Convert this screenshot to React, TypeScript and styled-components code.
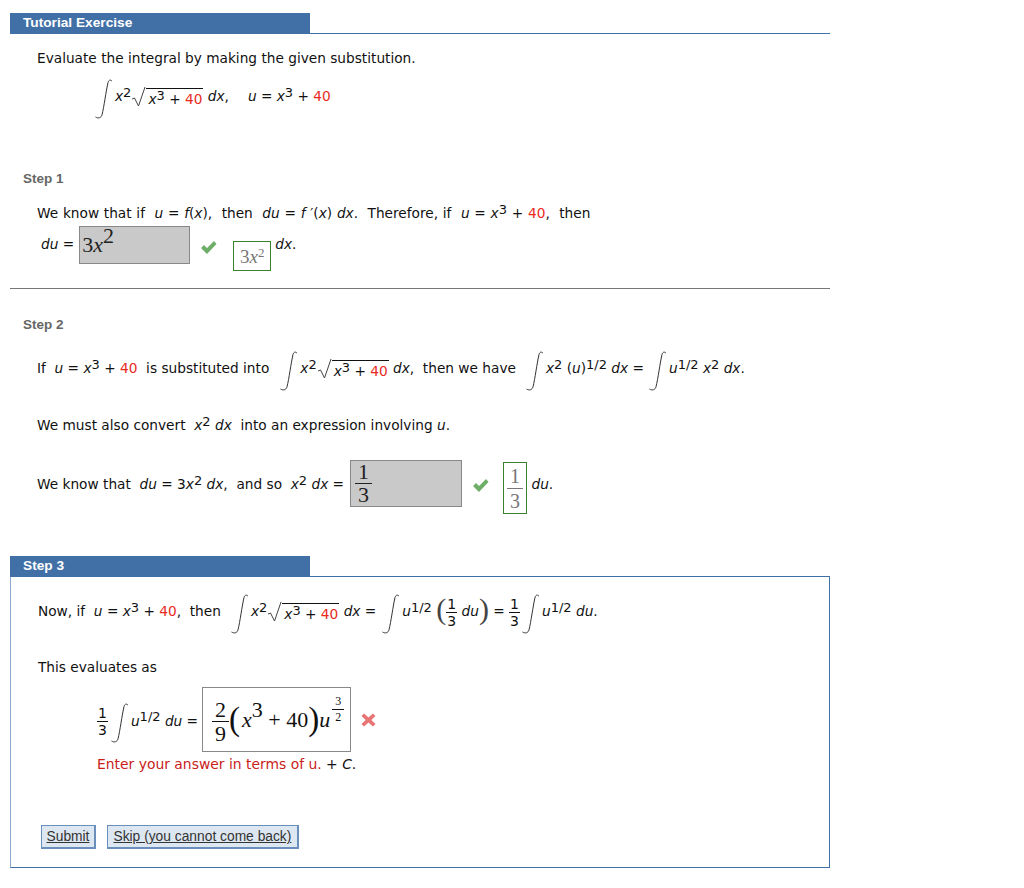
import React from "react";
import styled, { createGlobalStyle } from "styled-components";

const Global = createGlobalStyle`
  html, body { margin: 0; padding: 0; background: #fff; }
  body { font-family: "DejaVu Sans", Verdana, sans-serif; font-size: 13.7px; color: #111; }
`;

const Page = styled.div`
  width: 820px;
  padding: 13px 0 0 10px;
`;

const Header = styled.div<{ $mt?: number }>`
  border-bottom: 1px solid #4170a6;
  height: 20px;
  margin-top: ${(p) => p.$mt ?? 0}px;
`;

const HeaderTab = styled.div`
  width: 300px;
  height: 21px;
  box-sizing: border-box;
  padding-left: 13px;
  background: #4170a6;
  color: #fff;
  font: bold 13.7px/20px "Liberation Sans", Arial, sans-serif;
`;

const StepLabel = styled.div<{ $mt: number }>`
  margin-top: ${(p) => p.$mt}px;
  padding-left: 13px;
  color: #666;
  font: bold 13.5px/16px "Liberation Sans", Arial, sans-serif;
`;

const Row = styled.div<{ $mt: number; $h: number; $ml?: number; $ws?: number }>`
  white-space: pre;
  margin-top: ${(p) => p.$mt}px;
  margin-left: ${(p) => p.$ml ?? 27}px;
  height: ${(p) => p.$h}px;
  line-height: ${(p) => p.$h}px;
  word-spacing: ${(p) => p.$ws ?? 0}px;
`;

const Divider = styled.hr`
  margin: 25px 0 0;
  border: 0;
  border-top: 1px solid #777;
`;

const Step3Box = styled.div`
  box-sizing: border-box;
  height: 291px;
  padding: 14px 0 0 27px;
  border: 1px solid #4170a6;
  border-top: 0;
  border-left-color: #8fa9cc;
`;

const Gap = styled.span<{ $w: number }>`
  display: inline-block;
  width: ${(p) => p.$w}px;
`;

const I = styled.i`
  font-style: italic;
`;

const Red = styled.span`
  color: #e8291c;
`;

const Sup = styled.sup`
  font-size: 13px;
  line-height: 0;
  vertical-align: 4.5px;
`;

const RootWrap = styled.span`
  display: inline-flex;
  align-items: flex-end;
  vertical-align: middle;
`;

const RootBody = styled.span`
  border-top: 1px solid #111;
  padding: 2px 1px 0 2px;
  line-height: 17px;
  margin-top: 2px;
`;

const Frac = styled.span`
  display: inline-flex;
  flex-direction: column;
  align-items: center;
  vertical-align: middle;
  line-height: 16px;
  font-size: 14px;
`;

const FracTop = styled.span`
  border-bottom: 1px solid #111;
  padding: 0 1px;
`;

const BigParen = styled.span`
  font-size: 30px;
  color: #444;
  line-height: 0;
  vertical-align: -3px;
  font-family: "Liberation Serif", serif;
`;

const AnswerInput = styled.span<{ $w: number; $h: number; $mb?: number }>`
  box-sizing: border-box;
  display: inline-flex;
  vertical-align: middle;
  width: ${(p) => p.$w}px;
  height: ${(p) => p.$h}px;
  margin-bottom: ${(p) => p.$mb ?? 0}px;
  background: #c9c9c9;
  border: 1px solid #888;
  align-items: center;
  padding-left: 2px;
  font-family: "Liberation Serif", serif;
  color: #222;
`;

const MathFrac = styled.span<{ $size: number; $line: number; $color?: string }>`
  display: inline-flex;
  flex-direction: column;
  align-items: center;
  vertical-align: middle;
  font-family: "Liberation Serif", serif;
  font-style: normal;
  font-size: ${(p) => p.$size}px;
  line-height: ${(p) => p.$line}px;
  color: ${(p) => p.$color ?? "#222"};
`;

const MathFracTop = styled.span<{ $color?: string }>`
  border-bottom: 1px solid ${(p) => p.$color ?? "#222"};
  padding: 0 3px;
`;

const GreenBox = styled.span<{ $w: number; $h: number; $mt?: number }>`
  box-sizing: border-box;
  display: inline-flex;
  vertical-align: middle;
  width: ${(p) => p.$w}px;
  height: ${(p) => p.$h}px;
  margin-top: ${(p) => p.$mt ?? 0}px;
  border: 1px solid #3c7f30;
  align-items: center;
  justify-content: center;
  font-family: "Liberation Serif", serif;
  color: #777;
`;

const Serif = styled.span<{ $size: number }>`
  font-family: "Liberation Serif", serif;
  font-size: ${(p) => p.$size}px;
  line-height: 1;
`;

const SerifSup = styled.sup<{ $size: number; $up: number }>`
  font-size: ${(p) => p.$size}px;
  line-height: 0;
  vertical-align: ${(p) => p.$up}px;
`;

const AnswerBox = styled.span`
  box-sizing: border-box;
  display: inline-block;
  vertical-align: middle;
  width: 149px;
  height: 65px;
  margin-bottom: 4px;
  line-height: 63px;
  border: 1px solid #888;
  padding-left: 9px;
  font-family: "Liberation Serif", serif;
  font-size: 22px;
  color: #111;
`;

const AnswerParen = styled.span`
  font-size: 33px;
  line-height: 0;
  vertical-align: -3px;
`;

const SmallExp = styled.span`
  display: inline-flex;
  vertical-align: 22px;
  margin-left: 2px;
`;

const Feedback = styled.div`
  margin-top: 4px;
  margin-left: 59px;
  height: 16px;
  line-height: 16px;
  color: #c9211a;
  font-size: 13.9px;
`;

const Plain = styled.span`
  color: #111;
`;

const Buttons = styled.div`
  display: flex;
  gap: 11px;
  margin-top: 53px;
  margin-left: 3px;
`;

const Button = styled.button<{ $px: number }>`
  box-sizing: border-box;
  height: 24px;
  padding: 0 ${(p) => p.$px}px;
  background: #dde7f1;
  border: 1px solid #6a8fbb;
  border-width: 1px 2px 2px 1px;
  color: #333;
  font: 13.8px "Liberation Sans", Arial, sans-serif;
  text-decoration: underline;
`;

const IntegralSvg = styled.svg`
  vertical-align: -17.5px;
`;

const IconSvg = styled.svg<{ $mt?: number; $mb?: number }>`
  vertical-align: middle;
  margin-top: ${(p) => p.$mt ?? 0}px;
  margin-bottom: ${(p) => p.$mb ?? 0}px;
`;

function Integral() {
  return (
    <IntegralSvg width="21" height="40" viewBox="0 0 21 40" fill="none">
      <path
        d="M18 2.2 C16.500 0.500 14.800 0.800 14 3.500 C12 12 10 28 8 35.800 C7.200 38.800 4.500 39.800 1.500 38"
        stroke="#333"
        strokeWidth="1"
      />
    </IntegralSvg>
  );
}

function Radical() {
  return (
    <svg width="15" height="22" viewBox="0 0 15 22" fill="none">
      <path d="M1 13 L3.500 12 L7.500 20 L14 1" stroke="#444" strokeWidth="1" />
    </svg>
  );
}

function Root() {
  return (
    <RootWrap>
      <Radical />
      <RootBody>
        <I>x</I>
        <Sup>3</Sup> + <Red>40</Red>
      </RootBody>
    </RootWrap>
  );
}

function Check({ mt }: { mt?: number }) {
  return (
    <IconSvg $mt={mt} width="17" height="15" viewBox="0 0 17 15">
      <path d="M1 8 L4 5 L7 8 L14 1 L16.500 4 L7 14 Z" fill="#6fae68" />
    </IconSvg>
  );
}

function Cross() {
  return (
    <IconSvg $mb={4} width="15" height="14" viewBox="0 0 15 14">
      <path
        d="M3 0.500 L7.500 4.500 L12 0.500 L14.500 3 L10.300 7 L14.500 11 L12 13.500 L7.500 9.500 L3 13.500 L0.500 11 L4.700 7 L0.500 3 Z"
        fill="#e87474"
      />
    </IconSvg>
  );
}

function OneThird() {
  return (
    <Frac>
      <FracTop>1</FracTop>
      <span>3</span>
    </Frac>
  );
}

export default function App() {
  return (
    <Page>
      <Global />
      <Header>
        <HeaderTab>Tutorial Exercise</HeaderTab>
      </Header>

      <Row $mt={16} $h={17}>Evaluate the integral by making the given substitution.</Row>
      <Row $mt={9} $h={40} $ml={84}>
        <Integral />
        <I>x</I><Sup>2</Sup>
        <Root />
        <span> <I>dx</I>,</span>
        <Gap $w={19} />
        <I>u</I> = <I>x</I><Sup>3</Sup> + <Red>40</Red>
      </Row>

      <StepLabel $mt={55}>Step 1</StepLabel>
      <Row $mt={21} $h={10} $ws={0.4}>
        We know that if  <I>u</I> = <I>f</I>(<I>x</I>),  then  <I>du</I> = <I>f</I> ′(<I>x</I>) <I>dx</I>.  Therefore, if  <I>u</I> = <I>x</I><Sup>3</Sup> + <Red>40</Red>,  then
      </Row>
      <Row $mt={0} $h={45} $ml={31}>
        <I>du</I> =<Gap $w={5} />
        <AnswerInput $w={111} $h={38}>
          <Serif $size={22}>3<I>x</I><SerifSup $size={22} $up={9}>2</SerifSup></Serif>
        </AnswerInput>
        <Gap $w={10} />
        <Check mt={6} />
        <Gap $w={16} />
        <GreenBox $w={38} $h={30} $mt={23}>
          <Serif $size={19}>3<I>x</I><SerifSup $size={13} $up={6}>2</SerifSup></Serif>
        </GreenBox>
        <Gap $w={4} />
        <I>dx</I>.
      </Row>
      <Divider />

      <StepLabel $mt={28}>Step 2</StepLabel>
      <Row $mt={15} $h={40}>
        If  <I>u</I> = <I>x</I><Sup>3</Sup> + <Red>40</Red>  is substituted into
        <Gap $w={10} />
        <Integral />
        <I>x</I><Sup>2</Sup>
        <Root />
        <span> <I>dx</I>,  then we have</span>
        <Gap $w={9} />
        <Integral />
        <I>x</I><Sup>2</Sup> (<I>u</I>)<Sup>1/2</Sup> <I>dx</I> =
        <Gap $w={4} />
        <Integral />
        <I>u</I><Sup>1/2</Sup> <I>x</I><Sup>2</Sup> <I>dx</I>.
      </Row>
      <Row $mt={28} $h={18}>
        We must also convert  <I>x</I><Sup>2</Sup> <I>dx</I>  into an expression involving <I>u</I>.
      </Row>
      <Row $mt={21} $h={58}>
        We know that  <I>du</I> = 3<I>x</I><Sup>2</Sup> <I>dx</I>,  and so  <I>x</I><Sup>2</Sup> <I>dx</I> =
        <Gap $w={6} />
        <AnswerInput $w={112} $h={47} $mb={4}>
          <Gap $w={2} />
          <MathFrac $size={22} $line={22}>
            <MathFracTop>1</MathFracTop>
            <span>3</span>
          </MathFrac>
        </AnswerInput>
        <Gap $w={10} />
        <Check />
        <Gap $w={14} />
        <GreenBox $w={24} $h={52} $mt={6}>
          <MathFrac $size={20} $line={24} $color="#777">
            <MathFracTop $color="#777">1</MathFracTop>
            <span>3</span>
          </MathFrac>
        </GreenBox>
        <span> <I>du</I>.</span>
      </Row>

      <Header $mt={43}>
        <HeaderTab>Step 3</HeaderTab>
      </Header>
      <Step3Box>
        <Row $mt={0} $h={40} $ml={0}>
          Now, if  <I>u</I> = <I>x</I><Sup>3</Sup> + <Red>40</Red>,  then
          <Gap $w={9} />
          <Integral />
          <I>x</I><Sup>2</Sup>
          <Root />
          <span> <I>dx</I> =</span>
          <Gap $w={5} />
          <Integral />
          <I>u</I><Sup>1/2</Sup> <BigParen>(</BigParen>
          <OneThird />
          <span> <I>du</I></span>
          <BigParen>)</BigParen> = <OneThird />
          <Gap $w={1} />
          <Integral />
          <I>u</I><Sup>1/2</Sup> <I>du</I>.
        </Row>
        <Row $mt={27} $h={18} $ml={0}>This evaluates as</Row>
        <Row $mt={11} $h={65} $ml={59}>
          <OneThird />
          <Gap $w={2} />
          <Integral />
          <I>u</I><Sup>1/2</Sup> <I>du</I> =
          <Gap $w={4} />
          <AnswerBox>
            <MathFrac $size={22} $line={23} $color="#111">
              <MathFracTop $color="#111">2</MathFracTop>
              <span>9</span>
            </MathFrac>
            <AnswerParen>(</AnswerParen>
            <Gap $w={2} />
            <I>x</I>
            <SerifSup $size={22} $up={10}>3</SerifSup>
            <span> + 40</span>
            <AnswerParen>)</AnswerParen>
            <I>u</I>
            <SmallExp>
              <MathFrac $size={12} $line={15} $color="#111">
                <MathFracTop $color="#111">3</MathFracTop>
                <span>2</span>
              </MathFrac>
            </SmallExp>
          </AnswerBox>
          <Gap $w={10} />
          <Cross />
        </Row>
        <Feedback>
          Enter your answer in terms of u. <Plain>+ <I>C</I>.</Plain>
        </Feedback>
        <Buttons>
          <Button $px={4.5}>Submit</Button>
          <Button $px={5.5}>Skip (you cannot come back)</Button>
        </Buttons>
      </Step3Box>
    </Page>
  );
}
